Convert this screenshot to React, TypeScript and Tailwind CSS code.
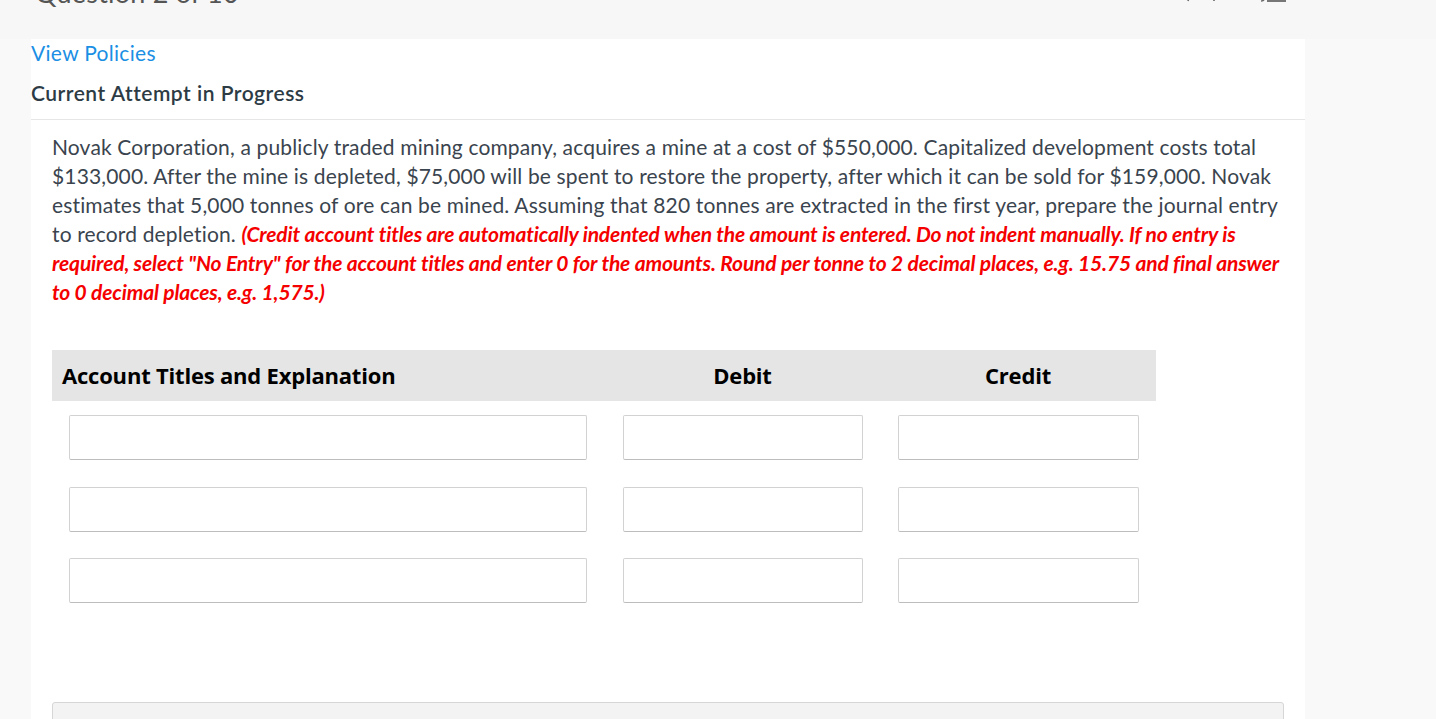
import React from 'react';

const rows = [0, 1, 2];

function InputBox({ className }: { className?: string }) {
  return (
    <input
      type="text"
      className={`block h-[45px] w-full rounded-[2px] border border-[#d2d2d2] border-b-[#bdbdbd] bg-white px-2 text-[18px] outline-none ${className ?? ''}`}
    />
  );
}

export default function App() {
  return (
    <div
      className="h-screen overflow-hidden bg-[#f9f9f9] text-[#39434d]"
      style={{ fontFamily: 'Lato, "Open Sans", sans-serif' }}
    >
      {/* top strip, scrolled past */}
      <div className="h-[39px] overflow-hidden bg-[#f7f7f7]">
        <div className="-mt-[23px] flex items-start justify-between pl-[35px] pr-[150px]">
          <span className="text-[27px] leading-[1.2] tracking-[0.2px] text-[#555]">Question 2 of 10</span>
          <div className="flex items-end pt-[10px] text-[#666]">
            <svg width="10" height="16" viewBox="0 0 10 16">
              <path d="M7 0 L3 14" stroke="#666" strokeWidth="1.6" fill="none" />
            </svg>
            <svg width="4" height="16" viewBox="0 0 4 16" className="ml-[17px]">
              <path d="M2 0 V14" stroke="#666" strokeWidth="1.6" />
            </svg>
            <div className="ml-[44px] flex items-end gap-[1px]">
              <svg width="6" height="16" viewBox="0 0 6 16">
                <path d="M4 0 V12 Q4 14 1 14" stroke="#666" strokeWidth="1.6" fill="none" />
              </svg>
              <div className="mb-[1px] h-[2px] w-[19px] bg-[#777]" />
            </div>
          </div>
        </div>
      </div>

      <div className="ml-[31px] w-[1274px] bg-white min-h-[700px]">
        <div className="border-b border-[#e6e6e6] pb-[13px]">
          <a href="#" className="block pt-[1px] text-[21px] leading-[26px] tracking-[0.3px] text-[#1b8fe4]">
            View Policies
          </a>
          <h2 className="mt-[14px] text-[21px] font-semibold leading-[26px] tracking-[0.5px] text-[#2d3b45]">
            Current Attempt in Progress
          </h2>
        </div>

        <div className="px-[21px] pt-[12px]">
          <p className="text-[21px] leading-[29px] tracking-[0.15px] text-[#3a444e]">
            Novak Corporation, a publicly traded mining company, acquires a mine at a cost of $550,000. Capitalized development costs total $133,000. After the mine is depleted, $75,000 will be spent to restore the property, after which it can be sold for $159,000. Novak estimates that 5,000 tonnes of ore can be mined. Assuming that 820 tonnes are extracted in the first year, prepare the journal entry to record depletion.{' '}
            <span className="font-bold italic tracking-[-0.15px] text-[#f50000]">
              (Credit account titles are automatically indented when the amount is entered. Do not indent manually. If no entry is required, select "No Entry" for the account titles and enter 0 for the amounts. Round per tonne to 2 decimal places, e.g. 15.75 and final answer to 0 decimal places, e.g. 1,575.)
            </span>
          </p>

          <div className="mt-[44px] w-[1104px]">
            <div
              className="grid h-[51px] grid-cols-[553px_275px_276px] items-center bg-[#e5e5e5] text-[22px] font-bold tracking-[-0.2px] text-black"
              style={{ fontFamily: '"Open Sans", Lato, sans-serif' }}
            >
              <div className="pl-[10px]">Account Titles and Explanation</div>
              <div className="text-center">Debit</div>
              <div className="text-center">Credit</div>
            </div>
            <div className="flex flex-col gap-[26.5px] pt-[14px]">
              {rows.map((r) => (
                <div key={r} className="grid grid-cols-[553px_275px_276px]">
                  <div className="pl-[17px] pr-[18px]">
                    <InputBox />
                  </div>
                  <div className="pl-[18px] pr-[17px]">
                    <InputBox />
                  </div>
                  <div className="pl-[18px] pr-[17px]">
                    <InputBox />
                  </div>
                </div>
              ))}
            </div>
          </div>

          <div className="mt-[99px] h-[60px] rounded-t-[3px] border border-[#d6d6d6] bg-[#f3f3f3]" />
        </div>
      </div>
    </div>
  );
}
